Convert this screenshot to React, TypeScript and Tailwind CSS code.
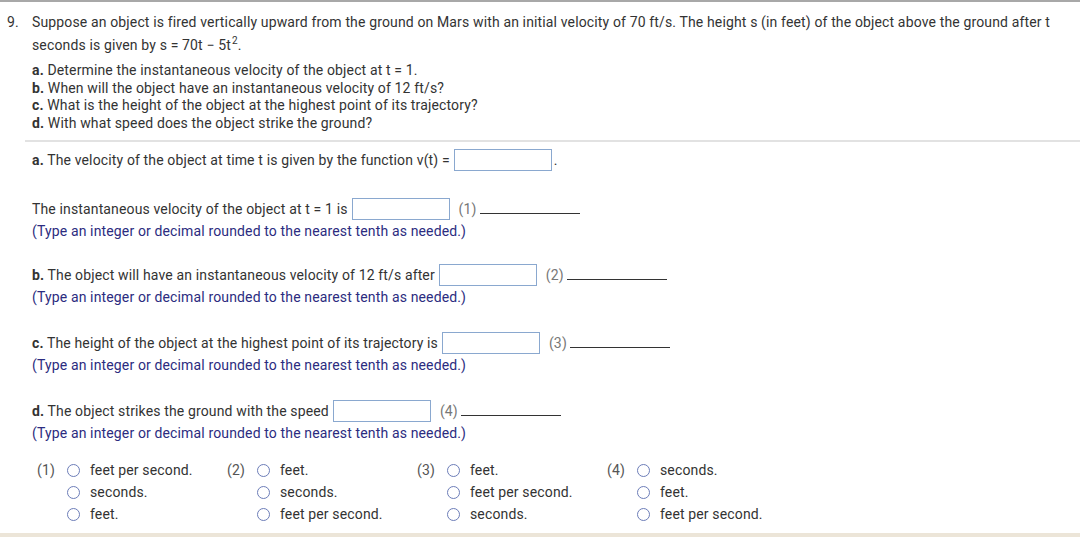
const parts = [
  { k: "a.", t: "Determine the instantaneous velocity of the object at t = 1." },
  { k: "b.", t: "When will the object have an instantaneous velocity of 12 ft/s?" },
  { k: "c.", t: "What is the height of the object at the highest point of its trajectory?" },
  { k: "d.", t: "With what speed does the object strike the ground?" },
];

const groups = [
  { n: "(1)", opts: ["feet per second.", "seconds.", "feet."] },
  { n: "(2)", opts: ["feet.", "seconds.", "feet per second."] },
  { n: "(3)", opts: ["feet.", "feet per second.", "seconds."] },
  { n: "(4)", opts: ["seconds.", "feet.", "feet per second."] },
];

function Box() {
  return <span className="inline-block h-[22px] w-[98px] shrink-0 border border-[#8aa8cf] bg-white" />;
}

function Blank({ n }: { n: string }) {
  return (
    <>
      <span className="ml-[9px] text-[#777]">{n}</span>
      <span className="ml-[3px] mt-[9px] inline-block h-px w-[100px] bg-[#333]" />
    </>
  );
}

function Hint() {
  return (
    <div className="h-[22px] leading-[22px] text-[#2c2c80]">
      (Type an integer or decimal rounded to the nearest tenth as needed.)
    </div>
  );
}

export default function App() {
  return (
    <div
      className="flex h-[537px] w-full flex-col overflow-hidden border-t-2 border-[#a8a8a8] bg-white text-[14px] tracking-[0.14px] text-[#333]"
      style={{ fontFamily: "Roboto, 'Liberation Sans', sans-serif" }}
    >
      <div className="flex pl-[7px] pt-[9px]">
        <span className="w-[25px] shrink-0 leading-[23px]">9.</span>
        <div className="pr-[20px]">
          <p className="leading-[23px]">
            Suppose an object is fired vertically upward from the ground on Mars with an initial velocity of 70 ft/s. The
            height s (in feet) of the object above the ground after t seconds is given by s = 70t − 5t
            <span className="relative -top-[6px] ml-px text-[10px] leading-none">2</span>.
          </p>
          <ul className="mt-[5px] leading-[17.5px]">
            {parts.map((p) => (
              <li key={p.k}>
                <span className="font-bold">{p.k}</span> {p.t}
              </li>
            ))}
          </ul>
        </div>
      </div>

      <div className="ml-[25px] mt-[8px] h-[2px] bg-[#e2e2e2]" />

      <div className="pl-[32px]">
        <div className="mt-[7px] flex h-[22px] items-center">
          <span>
            <span className="font-bold">a.</span> The velocity of the object at time t is given by the function v(t) =
          </span>
          <span className="ml-[4px]" />
          <Box />
          <span className="ml-[2px]">.</span>
        </div>

        <div className="mt-[27px] flex h-[22px] items-center">
          <span className="mr-[4px]">The instantaneous velocity of the object at t = 1 is</span>
          <Box />
          <Blank n="(1)" />
        </div>
        <Hint />

        <div className="mt-[22px] flex h-[22px] items-center">
          <span className="mr-[4px]">
            <span className="font-bold">b.</span> The object will have an instantaneous velocity of 12 ft/s after
          </span>
          <Box />
          <Blank n="(2)" />
        </div>
        <Hint />

        <div className="mt-[24px] flex h-[22px] items-center">
          <span className="mr-[4px]">
            <span className="font-bold">c.</span> The height of the object at the highest point of its trajectory is
          </span>
          <Box />
          <Blank n="(3)" />
        </div>
        <Hint />

        <div className="mt-[24px] flex h-[22px] items-center">
          <span className="mr-[4px]">
            <span className="font-bold">d.</span> The object strikes the ground with the speed
          </span>
          <Box />
          <Blank n="(4)" />
        </div>
        <Hint />
      </div>

      <div className="mt-[15px] flex pl-[37px]">
        {groups.map((g) => (
          <div key={g.n} className="flex w-[190px]">
            <span className="w-[30px] leading-[22px] text-[#555]">{g.n}</span>
            <div className="flex flex-col">
              {g.opts.map((o) => (
                <label key={o} className="flex h-[22px] items-center">
                  <span className="inline-block h-[13px] w-[13px] rounded-full border-[1.5px] border-[#6c7db8] bg-white" />
                  <span className="ml-[10px]">{o}</span>
                </label>
              ))}
            </div>
          </div>
        ))}
      </div>

      <div className="mt-auto h-[4px] bg-[#ece5d8]" />
    </div>
  );
}
